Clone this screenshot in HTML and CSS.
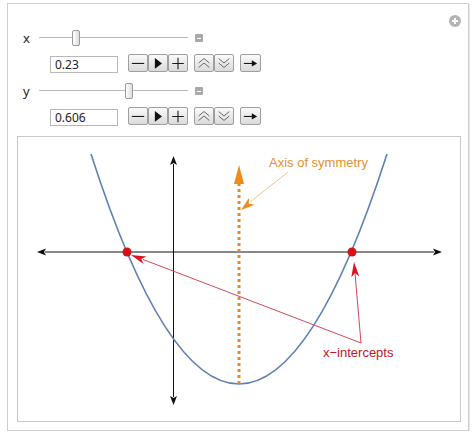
FILE: index.html
```html
<!DOCTYPE html>
<html>
<head>
<meta charset="utf-8">
<link rel="stylesheet" href="styles.css">
</head>
<body>
<div class="panel">
  <span class="add-icon">
    <svg width="12" height="12" viewBox="0 0 12 12"><circle cx="6" cy="6" r="6" fill="#b4b4b4"/><path d="M3 6H9M6 3V9" stroke="#fff" stroke-width="2"/></svg>
  </span>
  <div class="controls">
    <div class="group">
      <div class="slider-row">
        <span class="var">x</span>
        <div class="slider"><div class="track"></div><div class="thumb" style="left:33px"></div></div>
        <span class="collapse"></span>
      </div>
      <div class="button-row">
        <div class="field">0.23</div>
        <div class="btns">
          <span class="btn"><svg viewBox="0 0 20 18"><path d="M3 9.5H17" class="ic"/></svg></span>
          <span class="btn"><svg viewBox="0 0 20 18"><path d="M6.5 3.5L14.5 9.5L6.5 15.5Z" class="fill"/></svg></span>
          <span class="btn"><svg viewBox="0 0 20 18"><path d="M3.5 9.5H16.5M10 3V16" class="ic"/></svg></span>
        </div>
        <div class="btns">
          <span class="btn"><svg viewBox="0 0 20 18"><path d="M4 9L10 4L16 9M4 14L10 9L16 14" class="chev"/></svg></span>
          <span class="btn"><svg viewBox="0 0 20 18"><path d="M4 4L10 9L16 4M4 9L10 14L16 9" class="chev"/></svg></span>
        </div>
        <div class="btns">
          <span class="btn wide"><svg viewBox="0 0 21 18"><path d="M3 9.5H13" class="ic"/><path d="M12 6L18 9.5L12 13Z" class="fill"/></svg></span>
        </div>
      </div>
    </div>
    <div class="group">
      <div class="slider-row">
        <span class="var">y</span>
        <div class="slider"><div class="track"></div><div class="thumb" style="left:86px"></div></div>
        <span class="collapse"></span>
      </div>
      <div class="button-row">
        <div class="field">0.606</div>
        <div class="btns">
          <span class="btn"><svg viewBox="0 0 20 18"><path d="M3 9.5H17" class="ic"/></svg></span>
          <span class="btn"><svg viewBox="0 0 20 18"><path d="M6.5 3.5L14.5 9.5L6.5 15.5Z" class="fill"/></svg></span>
          <span class="btn"><svg viewBox="0 0 20 18"><path d="M3.5 9.5H16.5M10 3V16" class="ic"/></svg></span>
        </div>
        <div class="btns">
          <span class="btn"><svg viewBox="0 0 20 18"><path d="M4 9L10 4L16 9M4 14L10 9L16 14" class="chev"/></svg></span>
          <span class="btn"><svg viewBox="0 0 20 18"><path d="M4 4L10 9L16 4M4 9L10 14L16 9" class="chev"/></svg></span>
        </div>
        <div class="btns">
          <span class="btn wide"><svg viewBox="0 0 21 18"><path d="M3 9.5H13" class="ic"/><path d="M12 6L18 9.5L12 13Z" class="fill"/></svg></span>
        </div>
      </div>
    </div>
  </div>
  <div class="plot">
    <svg class="graph" viewBox="18 137 442 284" width="442" height="284">
      <path d="M45 252H434" class="axis"/>
      <path d="M37 252L46 248.5L44 252L46 255.5Z" class="axhead"/>
      <path d="M442 252L433 248.5L435 252L433 255.5Z" class="axhead"/>
      <path d="M173.5 164V397" class="axis"/>
      <path d="M173.5 156L170 165L173.5 163L177 165Z" class="axhead"/>
      <path d="M173.5 405L170 396L173.5 398L177 396Z" class="axhead"/>
      <path d="M91 154Q239 614 387 154" class="curve"/>
      <path d="M239 384V183" class="dots"/>
      <path d="M239 165L234 184L244 184Z" class="orange-fill"/>
      <path d="M288 172L250 202" class="orange-line"/>
      <path d="M241 210L249.1 197.7L248.8 203.7L254.7 204.7Z" class="orange-fill"/>
      <text x="269" y="167" class="lbl-orange">Axis of symmetry</text>
      <path d="M361 343L143 259.5M361 343L355 273" class="red-line"/>
      <path d="M131 255L146.4 256.6L141.3 258.9L143.6 264.1Z" class="red-fill"/>
      <path d="M354 262L359.3 276.6L355 273L351.3 277.3Z" class="red-fill"/>
      <circle cx="127" cy="252" r="4.5" class="pt"/>
      <circle cx="352" cy="252" r="4.5" class="pt"/>
      <text x="323" y="357" class="lbl-red">x−intercepts</text>
    </svg>
  </div>
</div>
</body>
</html>
```
FILE: styles.css
```css
html, body {
  margin: 0;
  padding: 0;
  background: #ffffff;
}

.panel {
  position: relative;
  box-sizing: border-box;
  width: 462px;
  height: 428px;
  margin: 3px 0 0 7px;
  border: 1px solid #cfcfcf;
  box-shadow: 1px 1px 0 #e6e6e6;
  background: #fff;
  display: flex;
  flex-direction: column;
  font-family: "Noto Sans", "Open Sans", sans-serif;
}

.add-icon {
  position: absolute;
  top: 11px;
  right: 7px;
  width: 12px;
  height: 12px;
  line-height: 0;
}

.controls {
  padding: 26px 0 0 15px;
  display: flex;
  flex-direction: column;
  gap: 11px;
}

.group {
  display: flex;
  flex-direction: column;
  gap: 8px;
}

.slider-row {
  display: flex;
  align-items: center;
  height: 16px;
}

.var {
  width: 16px;
  font-size: 13px;
  line-height: 16px;
  color: #222;
}

.slider {
  position: relative;
  width: 149px;
  height: 16px;
}

.track {
  position: absolute;
  left: 0;
  right: 0;
  top: 7px;
  height: 1px;
  background: #b9b9b9;
}

.thumb {
  position: absolute;
  top: 0;
  box-sizing: border-box;
  width: 8px;
  height: 16px;
  border: 1px solid #9a9a9a;
  border-radius: 2px;
  background: linear-gradient(to right, #ffffff, #dcdcdc);
}

.collapse {
  position: relative;
  margin-left: 7px;
  width: 8px;
  height: 8px;
  border-radius: 1px;
  background: #a9a9a9;
}

.collapse::after {
  content: "";
  position: absolute;
  left: 2px;
  top: 3.5px;
  width: 4px;
  height: 1px;
  background: #fff;
}

.button-row {
  display: flex;
  align-items: center;
  height: 18px;
  padding-left: 27px;
}

.field {
  box-sizing: border-box;
  width: 68px;
  height: 17px;
  margin-top: 2px;
  margin-right: 10px;
  border: 1px solid #b8b8b8;
  padding-left: 4px;
  font-size: 12px;
  line-height: 15px;
  color: #222;
}

.btns {
  display: flex;
  margin-right: 6px;
}

.btn {
  box-sizing: border-box;
  width: 20px;
  height: 18px;
  border: 1px solid #9f9f9f;
  border-radius: 2px;
  background: linear-gradient(to bottom, #fafafa, #dadada);
  line-height: 0;
}

.btn svg {
  width: 18px;
  height: 16px;
}

.btn.wide {
  width: 21px;
}

.btn.wide svg {
  width: 19px;
}

.ic {
  stroke: #1a1a1a;
  stroke-width: 1.2;
  fill: none;
}

.fill {
  fill: #111;
}

.chev {
  stroke: #555;
  stroke-width: 1;
  fill: none;
}

.plot {
  box-sizing: border-box;
  width: 444px;
  height: 286px;
  margin: 11px 0 0 9px;
  border: 1px solid #c9c9c9;
  line-height: 0;
}

.graph {
  display: block;
}

.axis {
  stroke: #111;
  stroke-width: 1;
  fill: none;
}

.axhead {
  fill: #111;
}

.curve {
  stroke: #5e81b5;
  stroke-width: 1.6;
  fill: none;
}

.dots {
  stroke: #ee8a1c;
  stroke-width: 3;
  stroke-dasharray: 3 3;
  fill: none;
}

.orange-fill {
  fill: #f08a1a;
}

.orange-line {
  stroke: #efc594;
  stroke-width: 1;
  fill: none;
}

.lbl-orange {
  font-family: "Liberation Sans", Arial, sans-serif;
  font-size: 13px;
  fill: #e6902e;
}

.red-line {
  stroke: #d24a58;
  stroke-width: 1;
  fill: none;
}

.red-fill {
  fill: #e0101c;
}

.pt {
  fill: #d80f16;
}

.lbl-red {
  font-family: "Liberation Sans", Arial, sans-serif;
  font-size: 13px;
  fill: #c81428;
}
```
